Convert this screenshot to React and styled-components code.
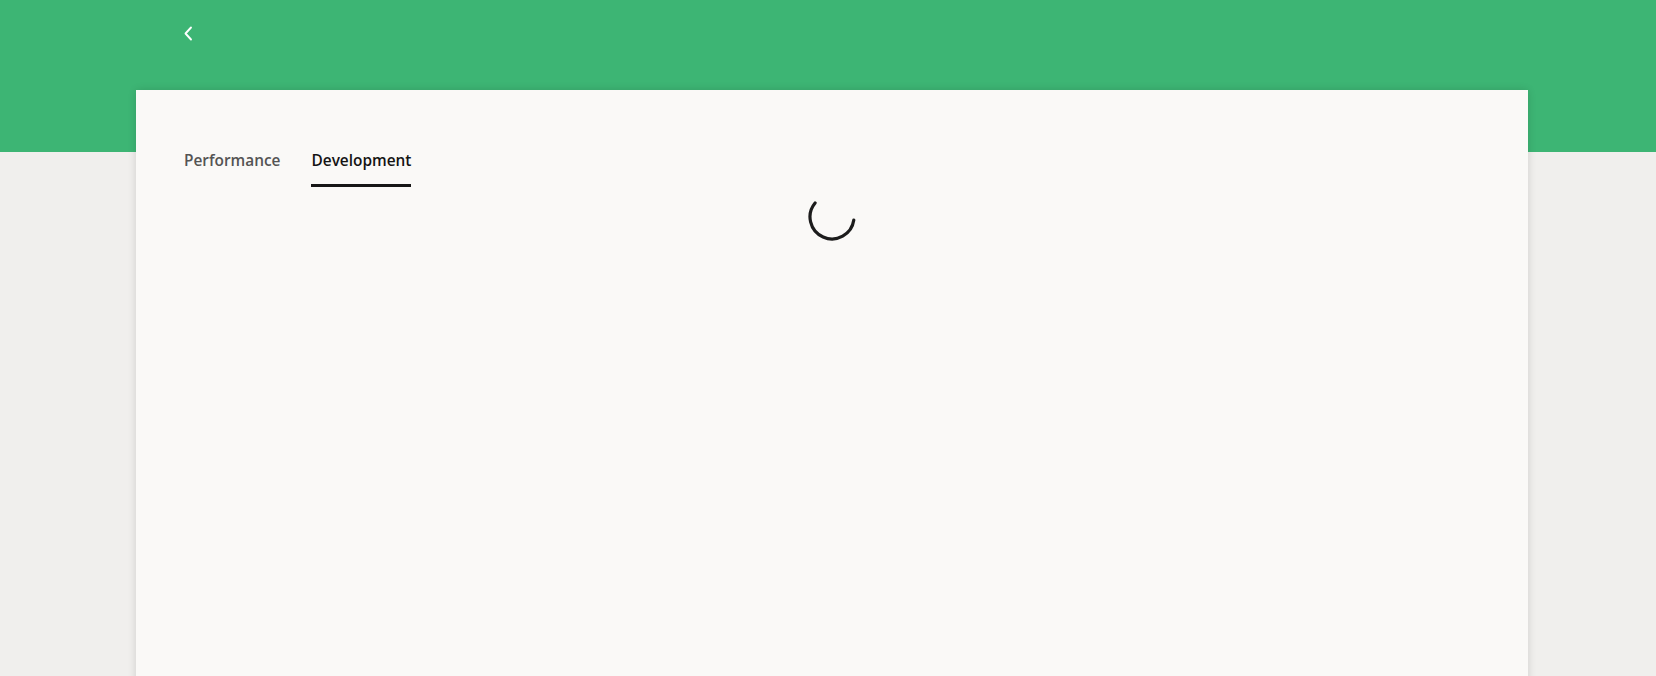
import React, { useState } from "react"
import styled, { createGlobalStyle, keyframes } from "styled-components"

const GlobalStyle = createGlobalStyle`
  html, body {
    margin: 0;
    padding: 0;
    background: #f0efed;
    font-family: "Open Sans", "Noto Sans", sans-serif;
    overflow: hidden;
  }
`

const Page = styled.div`
  min-height: 676px;
`

const Header = styled.header`
  height: 152px;
  background: #3db574;
  padding: 23px 0 0 180px;
  box-sizing: border-box;
`

const BackButton = styled.button`
  display: flex;
  align-items: center;
  justify-content: center;
  width: 16px;
  height: 20px;
  padding: 0;
  border: none;
  background: none;
  color: #fff;
  cursor: pointer;
`

const Card = styled.main`
  width: 1392px;
  height: 620px;
  margin: -62px 0 0 136px;
  background: #faf9f7;
  box-shadow: 0 0 8px rgba(0, 0, 0, 0.14);
  padding: 60px 48px 0;
  box-sizing: border-box;
`

const Tabs = styled.nav`
  display: flex;
  gap: 31px;
`

const Tab = styled.button`
  font-family: inherit;
  font-size: 15.4px;
  font-weight: 600;
  line-height: 22px;
  padding: 0 0 12px;
  border: none;
  border-bottom: 3px solid ${(p) => (p.$active ? "#161616" : "transparent")};
  background: none;
  color: ${(p) => (p.$active ? "#141414" : "#545454")};
  cursor: pointer;
`

const spin = keyframes`
  to { transform: rotate(360deg); }
`

const Loader = styled.div`
  display: flex;
  justify-content: center;
  padding-top: 6px;

  svg {
    animation: ${spin} 1s linear infinite;
    animation-play-state: paused;
  }
`

export default function App() {
  const [tab, setTab] = useState("development")

  return (
    <Page>
      <GlobalStyle />
      <Header>
        <BackButton aria-label="Back">
          <svg width="11" height="15" viewBox="0 0 11 15" fill="none">
            <path d="M8 1.5L2.5 7.5 8 13.5" stroke="currentColor" strokeWidth="1.9" strokeLinecap="round" strokeLinejoin="round" />
          </svg>
        </BackButton>
      </Header>
      <Card>
        <Tabs>
          <Tab $active={tab === "performance"} onClick={() => setTab("performance")}>
            Performance
          </Tab>
          <Tab $active={tab === "development"} onClick={() => setTab("development")}>
            Development
          </Tab>
        </Tabs>
        <Loader>
          <svg width="48" height="48" viewBox="0 0 48 48">
            <path
              d="M45.8 27.1 A22 22 0 1 1 7.1 9.9"
              fill="none"
              stroke="#1c1c1c"
              strokeWidth="3.2"
              strokeLinecap="round"
            />
          </svg>
        </Loader>
      </Card>
    </Page>
  )
}
